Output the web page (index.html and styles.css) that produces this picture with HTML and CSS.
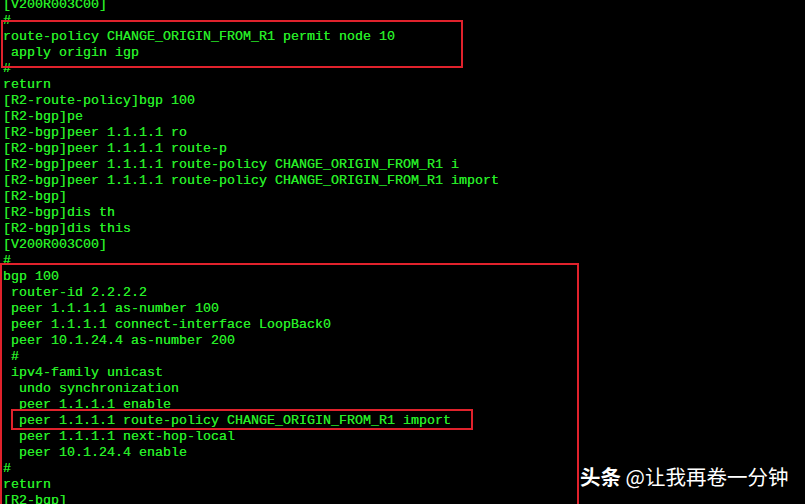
FILE: index.html
```html
<!DOCTYPE html>
<html lang="zh">

<head>
  <meta charset="UTF-8" />
  <meta name="viewport" content="width=device-width, initial-scale=1" />
  <title>R2 dis this</title>
  <link rel="stylesheet" href="styles.css">
</head>

<body>

  <div class="terminal">
<pre class="console">[V200R003C00]
#
route-policy CHANGE_ORIGIN_FROM_R1 permit node 10
 apply origin igp
#
return
[R2-route-policy]bgp 100
[R2-bgp]pe
[R2-bgp]peer 1.1.1.1 ro
[R2-bgp]peer 1.1.1.1 route-p
[R2-bgp]peer 1.1.1.1 route-policy CHANGE_ORIGIN_FROM_R1 i
[R2-bgp]peer 1.1.1.1 route-policy CHANGE_ORIGIN_FROM_R1 import
[R2-bgp]
[R2-bgp]dis th
[R2-bgp]dis this
[V200R003C00]
#
bgp 100
 router-id 2.2.2.2
 peer 1.1.1.1 as-number 100
 peer 1.1.1.1 connect-interface LoopBack0
 peer 10.1.24.4 as-number 200
 #
 ipv4-family unicast
  undo synchronization
  peer 1.1.1.1 enable
  peer 1.1.1.1 route-policy CHANGE_ORIGIN_FROM_R1 import
  peer 1.1.1.1 next-hop-local
  peer 10.1.24.4 enable
#
return
[R2-bgp]</pre>

    <!-- 标注框 -->
    <div class="mark mark-policy"></div>
    <div class="mark mark-bgp"></div>
    <div class="mark mark-import"></div>

    <div class="watermark"><b>头条</b> @让我再卷一分钟</div>
  </div>

</body>

</html>
```

FILE: styles.css
```css
html,
body {
  margin: 0;
  background: #000;
  overflow: hidden;
}

.terminal {
  position: relative;
  width: 805px;
  height: 504px;
  overflow: hidden;
  background: #000;
}

.console {
  margin: -3px 0 0;
  padding: 0 0 0 3px;
  font-family: "Courier New", "Nimbus Mono PS", "FreeMono", "Liberation Mono", monospace;
  font-size: 13.33px;
  line-height: 16px;
  color: #26ea26;
  text-shadow: 0 0 0.6px #26ea26;
}

/* 红色标注框 */
.mark {
  position: absolute;
  border: 2px solid #e0222c;
  box-sizing: border-box;
}

.mark-policy {
  left: 1px;
  top: 20px;
  width: 462px;
  height: 48px;
}

.mark-bgp {
  left: 0;
  top: 263px;
  width: 579px;
  height: 260px;
}

.mark-import {
  left: 11px;
  top: 409px;
  width: 462px;
  height: 21px;
}

.watermark {
  position: absolute;
  left: 580px;
  top: 462px;
  font-family: "Noto Sans CJK SC", sans-serif;
  font-size: 20.5px;
  line-height: 28px;
  color: #fff;
  white-space: nowrap;
}

.watermark b {
  font-weight: 700;
}
```
